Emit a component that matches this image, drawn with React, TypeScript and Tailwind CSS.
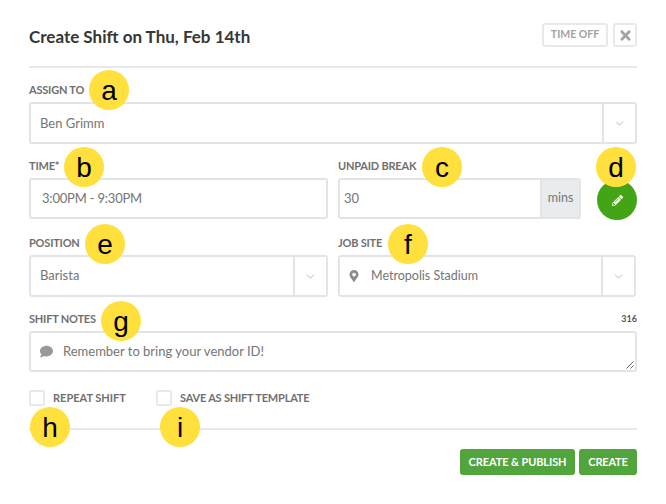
import { ChevronDown } from 'lucide-react'
import { FaComment, FaMapMarkerAlt, FaPencilAlt, FaTimes } from 'react-icons/fa'

const labelClass = "block h-[13px] text-[11px] leading-[13px] font-bold tracking-[-0.2px] text-[#707070] whitespace-nowrap"
const boxClass = "flex items-center rounded-[3px] border-2 border-[#e3e4e5] bg-white text-[13px] text-[#757575]"

const badges = [
  { letter: 'a', className: 'left-[89px] top-[70px]' },
  { letter: 'b', className: 'left-[64px] top-[147px]' },
  { letter: 'c', className: 'left-[422px] top-[147px]' },
  { letter: 'd', className: 'left-[596px] top-[147px]' },
  { letter: 'e', className: 'left-[85px] top-[224px]' },
  { letter: 'f', className: 'left-[388px] top-[224px]' },
  { letter: 'g', className: 'left-[101px] top-[301px]' },
  { letter: 'h', className: 'left-[30px] top-[407px]' },
  { letter: 'i', className: 'left-[160px] top-[407px]' },
]

function SelectBox({ children, className = '' }: { children: React.ReactNode; className?: string }) {
  return (
    <div className={`${boxClass} h-[42px] ${className}`}>
      <div className="flex min-w-0 flex-1 items-center">{children}</div>
      <div className="flex h-full w-[33px] items-center justify-center border-l-2 border-[#e3e4e5]">
        <ChevronDown size={13} strokeWidth={1.25} className="text-[#9a9a9a]" />
      </div>
    </div>
  )
}

export default function App() {
  return (
    <div className="relative h-[504px] w-[666px] overflow-hidden bg-white px-[29px] font-['Lato',sans-serif]">
      {/* Header */}
      <header className="flex h-[68px] items-start justify-between border-b-2 border-[#e9e9e9] pt-[23px]">
        <h1 className="text-[17px] leading-[27px] font-bold text-[#363636]">Create Shift on Thu, Feb 14th</h1>
        <div className="flex gap-[5px]">
          <button className="flex h-[24px] w-[66px] items-center justify-center rounded-[3px] border-2 border-[#e9e9e9] text-[10.5px] font-bold text-[#a3a3a3]">
            TIME OFF
          </button>
          <button className="flex h-[24px] w-[24px] items-center justify-center rounded-[3px] border-2 border-[#e9e9e9] text-[#a3a3a3]">
            <FaTimes size={15} />
          </button>
        </div>
      </header>

      {/* Assign to */}
      <section className="pt-[15px]">
        <label className={labelClass}>ASSIGN TO</label>
        <SelectBox className="mt-[6px]">
          <span className="pl-[9px] leading-[18px]">Ben Grimm</span>
        </SelectBox>
      </section>

      {/* Time and break */}
      <section className="flex pt-[15px]">
        <div className="w-[299px]">
          <label className={labelClass}>TIME*</label>
          <div className={`${boxClass} mt-[6px] h-[41px] pl-[11px] text-[12px] tracking-[-0.2px]`}>3:00PM - 9:30PM</div>
        </div>
        <div className="ml-[10px] w-[243px]">
          <label className={labelClass}>UNPAID BREAK</label>
          <div className={`${boxClass} mt-[6px] h-[41px] pl-[4px]`}>
            <span className="flex-1">30</span>
            <span className="flex h-full w-[39px] items-center justify-center border-l-2 border-[#e3e4e5] bg-[#e9ecee] text-[12.5px]">mins</span>
          </div>
        </div>
        <div className="-mb-[1px] ml-[16px] mt-[21px] flex h-[40px] w-[40px] items-center justify-center rounded-full bg-[#43a515] text-white">
          <FaPencilAlt size={11} />
        </div>
      </section>

      {/* Position and job site */}
      <section className="flex gap-[10px] pt-[17px]">
        <div className="w-[299px]">
          <label className={labelClass}>POSITION</label>
          <SelectBox className="mt-[6px]">
            <span className="pl-[9px]">Barista</span>
          </SelectBox>
        </div>
        <div className="w-[298px]">
          <label className={labelClass}>JOB SITE</label>
          <SelectBox className="mt-[6px]">
            <FaMapMarkerAlt size={12} className="ml-[8px] text-[#8c8c8c]" />
            <span className="ml-[11px] text-[12.5px]">Metropolis Stadium</span>
          </SelectBox>
        </div>
      </section>

      {/* Shift notes */}
      <section className="pt-[15px]">
        <div className="flex h-[13px] items-end justify-between">
          <label className={labelClass}>SHIFT NOTES</label>
          <span className="text-[9px] leading-[12px] font-bold text-[#555]">316</span>
        </div>
        <div className={`${boxClass} relative mt-[6px] h-[41px] pl-[9px]`}>
          <FaComment size={13} className="text-[#999]" />
          <span className="ml-[10px]">Remember to bring your vendor ID!</span>
          <svg viewBox="0 0 8 8" className="absolute right-[1px] bottom-[1px] h-[8px] w-[8px] text-[#666]">
            <path d="M0.5 7.5 7.5 0.5M4.5 7.5 7.5 4.5" stroke="currentColor" strokeWidth="1" fill="none" />
          </svg>
        </div>
      </section>

      {/* Options */}
      <section className="flex items-center pt-[18px]">
        <span className="h-[16px] w-[16px] rounded-[2px] border-2 border-[#e9e9e9]" />
        <span className="ml-[8px] w-[103px] text-[11px] leading-[16px] font-bold text-[#707070]">REPEAT SHIFT</span>
        <span className="h-[16px] w-[16px] rounded-[2px] border-2 border-[#e9e9e9]" />
        <span className="ml-[8px] text-[11px] leading-[16px] font-bold tracking-[-0.2px] text-[#707070]">SAVE AS SHIFT TEMPLATE</span>
      </section>

      {/* Footer */}
      <footer className="mt-[22px] flex justify-end gap-[4px] border-t-2 border-[#e9e9e9] pt-[19px]">
        <button className="h-[26px] w-[115px] rounded-[3px] bg-[#52a43d] text-[11px] font-bold tracking-[-0.1px] text-white">CREATE &amp; PUBLISH</button>
        <button className="h-[26px] w-[58px] rounded-[3px] bg-[#52a43d] text-[11px] font-bold tracking-[-0.2px] text-white">CREATE</button>
      </footer>

      {badges.map((badge) => (
        <div
          key={badge.letter}
          className={`absolute flex h-[40px] w-[40px] items-center justify-center rounded-full bg-[#ffe03d] pt-[1px] font-['Liberation_Sans',sans-serif] text-[28px] leading-none text-black ${badge.className}`}
        >
          {badge.letter}
        </div>
      ))}
    </div>
  )
}
